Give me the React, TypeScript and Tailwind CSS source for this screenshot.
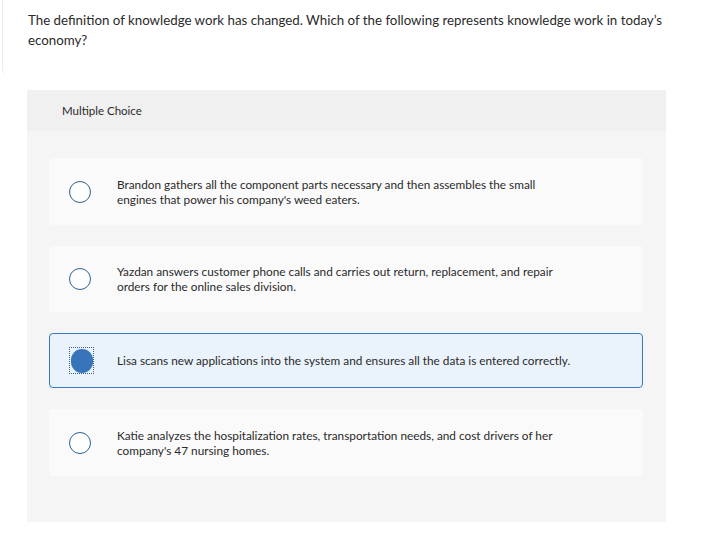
const OPTIONS = [
  {
    text: "Brandon gathers all the component parts necessary and then assembles the small engines that power his company's weed eaters.",
    h: "h-[67px]",
  },
  {
    text: "Yazdan answers customer phone calls and carries out return, replacement, and repair orders for the online sales division.",
    h: "h-[66px]",
  },
  {
    text: "Lisa scans new applications into the system and ensures all the data is entered correctly.",
    h: "h-[55px]",
    selected: true,
  },
  {
    text: "Katie analyzes the hospitalization rates, transportation needs, and cost drivers of her company's 47 nursing homes.",
    h: "h-[67px]",
  },
];

export default function App() {
  return (
    <div className="min-h-screen bg-white text-[#2a2a2a] font-['Lato','Liberation_Sans',sans-serif]">
      {/* question card, only its left edge shows */}
      <div className="ml-[2px] h-[75px] rounded-bl-md border-l border-b border-[#ececec] border-b-transparent pl-[25px] pt-[10px]">
        <p className="text-[13.3px] leading-[20px] max-w-[650px]">
          The definition of knowledge work has changed. Which of the following represents knowledge work in today’s economy?
        </p>
      </div>

      <div className="ml-[27px] mt-[15px] w-[639px] rounded-t-sm bg-[#f5f5f5] pb-[46px]">
        <div className="flex h-[41px] items-center bg-[#f0f0f0] px-[35px] pt-px text-[11.5px]">
          Multiple Choice
        </div>

        <div className="mt-[27px] flex flex-col gap-[21px] pl-[22px] pr-[23px]">
          {OPTIONS.map((o) => (
            <div
              key={o.text}
              className={`flex ${o.h} items-center rounded-sm pl-[20px] ${
                o.selected ? "border border-[#3b78c1] bg-[#eaf2fb]" : "bg-[#fafafa]"
              }`}
            >
              {o.selected ? (
                <span className="-ml-px mr-[23px] flex h-[27px] w-[25px] shrink-0 items-center justify-center border border-dotted border-[#2f5f95]">
                  <span className="h-[24px] w-[22px] rounded-full bg-[#3774b9]" />
                </span>
              ) : (
                <span className="mr-[26px] h-[22px] w-[22px] shrink-0 rounded-full border-[1.5px] border-[#2c5f93] bg-white" />
              )}
              <span
                className={`text-[11.8px] leading-[15px] ${
                  o.selected ? "whitespace-nowrap" : "max-w-[450px]"
                }`}
              >
                {o.text}
              </span>
            </div>
          ))}
        </div>
      </div>
    </div>
  );
}
